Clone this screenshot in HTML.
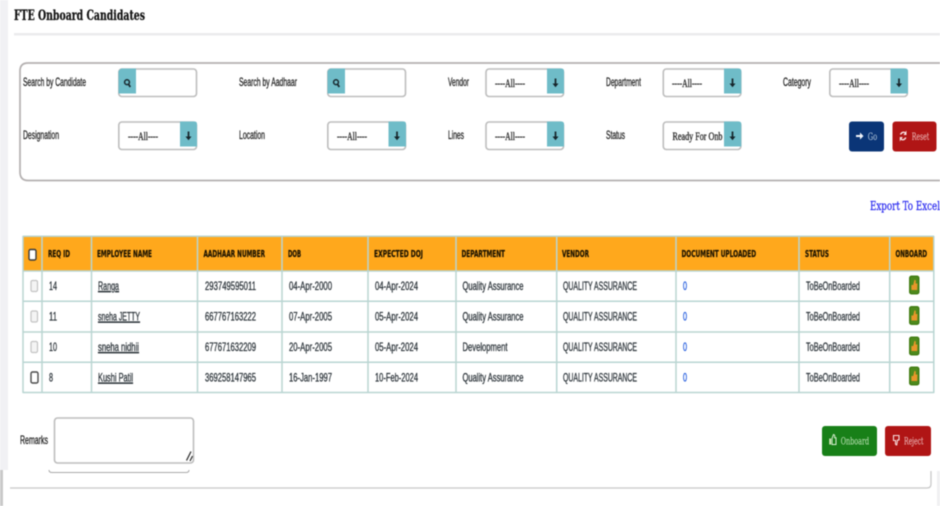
<!DOCTYPE html>
<html><head><meta charset="utf-8"><title>FTE Onboard Candidates</title>
<style>
html,body{margin:0;padding:0;background:#fff;width:940px;height:506px;overflow:hidden}
svg{display:block;filter:blur(.4px)}
text{font-family:"Liberation Sans",sans-serif;font-size:11px;fill:#222;stroke:#222;stroke-width:.3}
.t{font-family:"DejaVu Serif","Liberation Serif",serif;font-weight:bold;font-size:13.500px;fill:#111;stroke:#111;stroke-width:.25}
.h{font-family:"DejaVu Sans","Liberation Sans",sans-serif;font-weight:bold;font-size:9.500px;fill:#1a1200;stroke:#1a1200;stroke-width:.25}
.l{font-size:12px;fill:#222}
.c{font-size:12px;fill:#2a3238;stroke:#2a3238;stroke-width:.3}
.a{text-decoration:underline}
.s{font-family:"Liberation Serif",serif;font-size:11.500px;fill:#222}
.e{font-family:"DejaVu Serif","Liberation Serif",serif;font-size:12.500px;fill:#2222ee;stroke:#2222ee;stroke-width:.2}
.b{font-family:"DejaVu Serif","Liberation Serif",serif;font-size:10px;stroke:none}
.box{fill:#fff;stroke:#bdbdbd;stroke-width:1.600}
.teal{fill:#6fbcc8}
.g{stroke:#b9d5d2;stroke-width:1.500;fill:none}
</style></head><body>
<svg width="940" height="506" viewBox="0 0 940 506" xmlns="http://www.w3.org/2000/svg">
<defs>
<g id="mag"><circle cx="-.5" cy="-.8" r="2.400" fill="none" stroke="#1a2a30" stroke-width="1.500"/><path d="M1 1.200L2.800 4" stroke="#1a2a30" stroke-width="1.800"/></g>
<g id="arr"><path d="M0-4V2" stroke="#16242a" stroke-width="1.700"/><path d="M-3 1L3 1L0 4.800Z" fill="#16242a"/></g>
<g id="thumb"><rect x="0" y="0" width="10.500" height="19" rx="2.500" fill="#4e8a1c"/><rect x=".8" y=".8" width="8.900" height="17.400" rx="2" fill="none" stroke="#3a7412" stroke-width=".7"/><path d="M2.400 9.500H4.200L5.400 4.500C6.400 4 6.900 5 6.800 6.200L6.600 8H8.400L8.200 14.500H2.400Z" fill="#e8962a"/></g>
</defs>
<rect x="0" y="0" width="8" height="470" fill="#f1f1f4"/>
<rect x="0" y="470" width="3" height="36" fill="#c9c9c9"/>
<rect x="937" y="471" width="3" height="35" fill="#f0f0f2"/>
<path d="M10 488H927Q931 488 931 484V471" fill="none" stroke="#c8c8c8" stroke-width="1.300"/>
<path d="M49 470Q49 472.500 52 472.500H186Q189 472.500 189 470" fill="none" stroke="#aaa" stroke-width="1"/>

<text class="t" x="14" y="20" textLength="131" lengthAdjust="spacingAndGlyphs">FTE Onboard Candidates</text>
<rect x="14" y="33" width="926" height="2.500" fill="#ebebed"/>

<path d="M945 63H28Q20 63 20 71V172Q20 180.500 28 180.500H945" fill="none" stroke="#b4b0b0" stroke-width="1.700"/>

<text class="l" x="23" y="86" textLength="63" lengthAdjust="spacingAndGlyphs">Search by Candidate</text>
<text class="l" x="239" y="86" textLength="58" lengthAdjust="spacingAndGlyphs">Search by Aadhaar</text>
<text class="l" x="448" y="86" textLength="21" lengthAdjust="spacingAndGlyphs">Vendor</text>
<text class="l" x="606" y="86" textLength="35" lengthAdjust="spacingAndGlyphs">Department</text>
<text class="l" x="783" y="86" textLength="28" lengthAdjust="spacingAndGlyphs">Category</text>
<text class="l" x="23" y="139" textLength="36" lengthAdjust="spacingAndGlyphs">Designation</text>
<text class="l" x="239" y="139" textLength="26" lengthAdjust="spacingAndGlyphs">Location</text>
<text class="l" x="448" y="139" textLength="16" lengthAdjust="spacingAndGlyphs">Lines</text>
<text class="l" x="606" y="139" textLength="19" lengthAdjust="spacingAndGlyphs">Status</text>

<rect class="box" x="118.800" y="69" width="77.700" height="27.500" rx="3"/><path class="teal" d="M121 68.500H136V93.500H118.500V71Z"/><use href="#mag" x="127.500" y="83"/>
<rect class="box" x="327.800" y="69" width="77.700" height="27.500" rx="3"/><path class="teal" d="M330 68.500H345V93.500H327.500V71Z"/><use href="#mag" x="336.500" y="83"/>

<rect class="box" x="486" y="69" width="77.500" height="27.500" rx="3"/><path class="teal" d="M547 68.500H561Q564 68.500 564 71V93.500H547Z"/><use href="#arr" x="555.500" y="82.500"/><text class="s" x="495" y="87" textLength="30" lengthAdjust="spacingAndGlyphs">----All----</text>
<rect class="box" x="663.300" y="69" width="77.500" height="27.500" rx="3"/><path class="teal" d="M724 68.500H738.500Q741.300 68.500 741.300 71V93.500H724Z"/><use href="#arr" x="732.500" y="82.500"/><text class="s" x="672" y="87" textLength="30" lengthAdjust="spacingAndGlyphs">----All----</text>
<rect class="box" x="829.800" y="69" width="77.500" height="27.500" rx="3"/><path class="teal" d="M890.500 68.500H905Q908 68.500 908 71V93.500H890.500Z"/><use href="#arr" x="899" y="82.500"/><text class="s" x="839" y="87" textLength="30" lengthAdjust="spacingAndGlyphs">----All----</text>

<rect class="box" x="118.800" y="122" width="77.700" height="27.500" rx="3"/><path class="teal" d="M180 121.500H194.500Q197 121.500 197 124V146.500H180Z"/><use href="#arr" x="188.500" y="135.500"/><text class="s" x="128" y="140" textLength="30" lengthAdjust="spacingAndGlyphs">----All----</text>
<rect class="box" x="327.800" y="122" width="77.700" height="27.500" rx="3"/><path class="teal" d="M388.500 121.500H403.500Q406 121.500 406 124V146.500H388.500Z"/><use href="#arr" x="397" y="135.500"/><text class="s" x="337" y="140" textLength="30" lengthAdjust="spacingAndGlyphs">----All----</text>
<rect class="box" x="486" y="122" width="77.500" height="27.500" rx="3"/><path class="teal" d="M547 121.500H561Q564 121.500 564 124V146.500H547Z"/><use href="#arr" x="555.500" y="135.500"/><text class="s" x="495" y="140" textLength="30" lengthAdjust="spacingAndGlyphs">----All----</text>
<rect class="box" x="663.300" y="122" width="77.500" height="27.500" rx="3"/><text class="s" x="672.500" y="140" textLength="50" lengthAdjust="spacingAndGlyphs">Ready For Onb</text><path class="teal" d="M724 121.500H738.500Q741.300 121.500 741.300 124V146.500H724Z"/><use href="#arr" x="732.500" y="135.500"/>

<rect x="849" y="121.500" width="35" height="30" rx="3" fill="#0a3577"/>
<path d="M856 135H860V132.500L863.500 136L860 139.500V137H856Z" fill="#f2f5fa"/>
<text class="b" x="867.700" y="140" textLength="9.500" lengthAdjust="spacingAndGlyphs" style="fill:#b4c8dc">Go</text>
<rect x="892.500" y="121.500" width="44" height="30" rx="3" fill="#b01515"/>
<path d="M906 133.500A3.500 4.500 0 0 0 900.500 134.500M900.300 138.500A3.500 4.500 0 0 0 905.800 137.500" fill="none" stroke="#f8e4e4" stroke-width="1.400"/>
<path d="M906.500 130.500V135H903.500ZM899.800 141.500V137H902.800Z" fill="#f8e4e4"/>
<text class="b" x="911.700" y="140" textLength="17.500" lengthAdjust="spacingAndGlyphs" style="fill:#f0c4c4">Reset</text>

<text class="e" x="870" y="210" textLength="70" lengthAdjust="spacingAndGlyphs">Export To Excel</text>

<rect x="23" y="237" width="911" height="33.500" fill="#ffa81c"/>
<path class="g" d="M22.800 236.300H934M22.800 271H934M22.800 301.300H934M22.800 332H934M22.800 362.300H934M22.800 392.500H934"/>
<path class="g" d="M23 236V393M933.800 236V393M42 236V393M91.500 236V393M197.500 236V393M282 236V393M368 236V393M456 236V393M556.700 236V393M676 236V393M799 236V393M889.700 236V393"/>

<rect x="29" y="249.500" width="7" height="10.500" rx="1.500" fill="#fff" stroke="#3a3a3a" stroke-width="1.400"/>
<text class="h" x="48" y="257" textLength="22" lengthAdjust="spacingAndGlyphs">REQ ID</text>
<text class="h" x="97" y="257" textLength="55" lengthAdjust="spacingAndGlyphs">EMPLOYEE NAME</text>
<text class="h" x="203.500" y="257" textLength="61.500" lengthAdjust="spacingAndGlyphs">AADHAAR NUMBER</text>
<text class="h" x="288" y="257" textLength="13" lengthAdjust="spacingAndGlyphs">DOB</text>
<text class="h" x="374" y="257" textLength="49" lengthAdjust="spacingAndGlyphs">EXPECTED DOJ</text>
<text class="h" x="461.500" y="257" textLength="43.500" lengthAdjust="spacingAndGlyphs">DEPARTMENT</text>
<text class="h" x="562" y="257" textLength="27" lengthAdjust="spacingAndGlyphs">VENDOR</text>
<text class="h" x="681.500" y="257" textLength="74.500" lengthAdjust="spacingAndGlyphs">DOCUMENT UPLOADED</text>
<text class="h" x="805" y="257" textLength="24" lengthAdjust="spacingAndGlyphs">STATUS</text>
<text class="h" x="895.500" y="257" textLength="31.500" lengthAdjust="spacingAndGlyphs">ONBOARD</text>

<!-- row 1 -->
<rect x="31" y="280.500" width="6.500" height="11" rx="1.500" fill="#f4f4f4" stroke="#c4c4c4" stroke-width="1.200"/>
<text class="c" x="49" y="290" textLength="8" lengthAdjust="spacingAndGlyphs">14</text>
<text class="c a" x="98" y="290" textLength="21" lengthAdjust="spacingAndGlyphs">Ranga</text>
<text class="c" x="205" y="290" textLength="51" lengthAdjust="spacingAndGlyphs">293749595011</text>
<text class="c" x="289" y="290" textLength="43" lengthAdjust="spacingAndGlyphs">04-Apr-2000</text>
<text class="c" x="375" y="290" textLength="43" lengthAdjust="spacingAndGlyphs">04-Apr-2024</text>
<text class="c" x="462.500" y="290" textLength="61" lengthAdjust="spacingAndGlyphs">Quality Assurance</text>
<text class="c" x="563" y="290" textLength="74" lengthAdjust="spacingAndGlyphs">QUALITY ASSURANCE</text>
<text class="c" x="683" y="290" textLength="4" lengthAdjust="spacingAndGlyphs" style="fill:#1a55dd;stroke:#1a55dd">0</text>
<text class="c" x="806" y="290" textLength="54" lengthAdjust="spacingAndGlyphs">ToBeOnBoarded</text>
<use href="#thumb" x="909" y="275.500"/>

<!-- row 2 -->
<rect x="31" y="311" width="6.500" height="11" rx="1.500" fill="#f4f4f4" stroke="#c4c4c4" stroke-width="1.200"/>
<text class="c" x="49" y="320.500" textLength="8" lengthAdjust="spacingAndGlyphs">11</text>
<text class="c a" x="98" y="320.500" textLength="42" lengthAdjust="spacingAndGlyphs">sneha JETTY</text>
<text class="c" x="205" y="320.500" textLength="51" lengthAdjust="spacingAndGlyphs">667767163222</text>
<text class="c" x="289" y="320.500" textLength="43" lengthAdjust="spacingAndGlyphs">07-Apr-2005</text>
<text class="c" x="375" y="320.500" textLength="43" lengthAdjust="spacingAndGlyphs">05-Apr-2024</text>
<text class="c" x="462.500" y="320.500" textLength="61" lengthAdjust="spacingAndGlyphs">Quality Assurance</text>
<text class="c" x="563" y="320.500" textLength="74" lengthAdjust="spacingAndGlyphs">QUALITY ASSURANCE</text>
<text class="c" x="683" y="320.500" textLength="4" lengthAdjust="spacingAndGlyphs" style="fill:#1a55dd;stroke:#1a55dd">0</text>
<text class="c" x="806" y="320.500" textLength="54" lengthAdjust="spacingAndGlyphs">ToBeOnBoarded</text>
<use href="#thumb" x="909" y="306"/>

<!-- row 3 -->
<rect x="31" y="341.500" width="6.500" height="11" rx="1.500" fill="#f4f4f4" stroke="#c4c4c4" stroke-width="1.200"/>
<text class="c" x="49" y="351" textLength="8" lengthAdjust="spacingAndGlyphs">10</text>
<text class="c a" x="98" y="351" textLength="41" lengthAdjust="spacingAndGlyphs">sneha nidhii</text>
<text class="c" x="205" y="351" textLength="51" lengthAdjust="spacingAndGlyphs">677671632209</text>
<text class="c" x="289" y="351" textLength="43" lengthAdjust="spacingAndGlyphs">20-Apr-2005</text>
<text class="c" x="375" y="351" textLength="43" lengthAdjust="spacingAndGlyphs">05-Apr-2024</text>
<text class="c" x="462.500" y="351" textLength="45" lengthAdjust="spacingAndGlyphs">Development</text>
<text class="c" x="563" y="351" textLength="74" lengthAdjust="spacingAndGlyphs">QUALITY ASSURANCE</text>
<text class="c" x="683" y="351" textLength="4" lengthAdjust="spacingAndGlyphs" style="fill:#1a55dd;stroke:#1a55dd">0</text>
<text class="c" x="806" y="351" textLength="54" lengthAdjust="spacingAndGlyphs">ToBeOnBoarded</text>
<use href="#thumb" x="909" y="336.500"/>

<!-- row 4 -->
<rect x="31" y="372" width="7" height="11" rx="1.500" fill="#fff" stroke="#4a4a4a" stroke-width="1.400"/>
<text class="c" x="49" y="381.500" textLength="4" lengthAdjust="spacingAndGlyphs">8</text>
<text class="c a" x="98" y="381.500" textLength="35" lengthAdjust="spacingAndGlyphs">Kushi Patil</text>
<text class="c" x="205" y="381.500" textLength="51" lengthAdjust="spacingAndGlyphs">369258147965</text>
<text class="c" x="289" y="381.500" textLength="43" lengthAdjust="spacingAndGlyphs">16-Jan-1997</text>
<text class="c" x="375" y="381.500" textLength="43" lengthAdjust="spacingAndGlyphs">10-Feb-2024</text>
<text class="c" x="462.500" y="381.500" textLength="61" lengthAdjust="spacingAndGlyphs">Quality Assurance</text>
<text class="c" x="563" y="381.500" textLength="74" lengthAdjust="spacingAndGlyphs">QUALITY ASSURANCE</text>
<text class="c" x="683" y="381.500" textLength="4" lengthAdjust="spacingAndGlyphs" style="fill:#1a55dd;stroke:#1a55dd">0</text>
<text class="c" x="806" y="381.500" textLength="54" lengthAdjust="spacingAndGlyphs">ToBeOnBoarded</text>
<use href="#thumb" x="909" y="366.500"/>

<text class="l" x="20" y="444" textLength="28" lengthAdjust="spacingAndGlyphs">Remarks</text>
<rect class="box" x="54.500" y="418" width="139" height="45" rx="3"/>
<path d="M186.500 460.500L191 451.500M190 461L192.500 456" stroke="#333" stroke-width="1.300" fill="none"/>

<rect x="822" y="426" width="55" height="30" rx="3" fill="#188018"/>
<path d="M829.300 438.500H831V444.500H829.300Z" fill="#e4efc8"/>
<path d="M832 444.500V438.500L833.500 434.500C834.700 434.500 834.900 435.800 834.600 437.800H836V444.500Z" fill="none" stroke="#dcefd4" stroke-width="1"/>
<text class="b" x="840.700" y="444.500" textLength="28.500" lengthAdjust="spacingAndGlyphs" style="fill:#c4e6bc">Onboard</text>
<rect x="885" y="426" width="46" height="30" rx="3" fill="#b01515"/>
<path d="M893.500 435.500H899V440H897.500L896.700 445C895.500 445 895.300 443.800 895.500 442L895.600 440.500H893.500Z" fill="none" stroke="#f6dede" stroke-width="1.100"/>
<text class="b" x="904" y="444.500" textLength="19.500" lengthAdjust="spacingAndGlyphs" style="fill:#f0c4c4">Reject</text>
</svg>
</body></html>
